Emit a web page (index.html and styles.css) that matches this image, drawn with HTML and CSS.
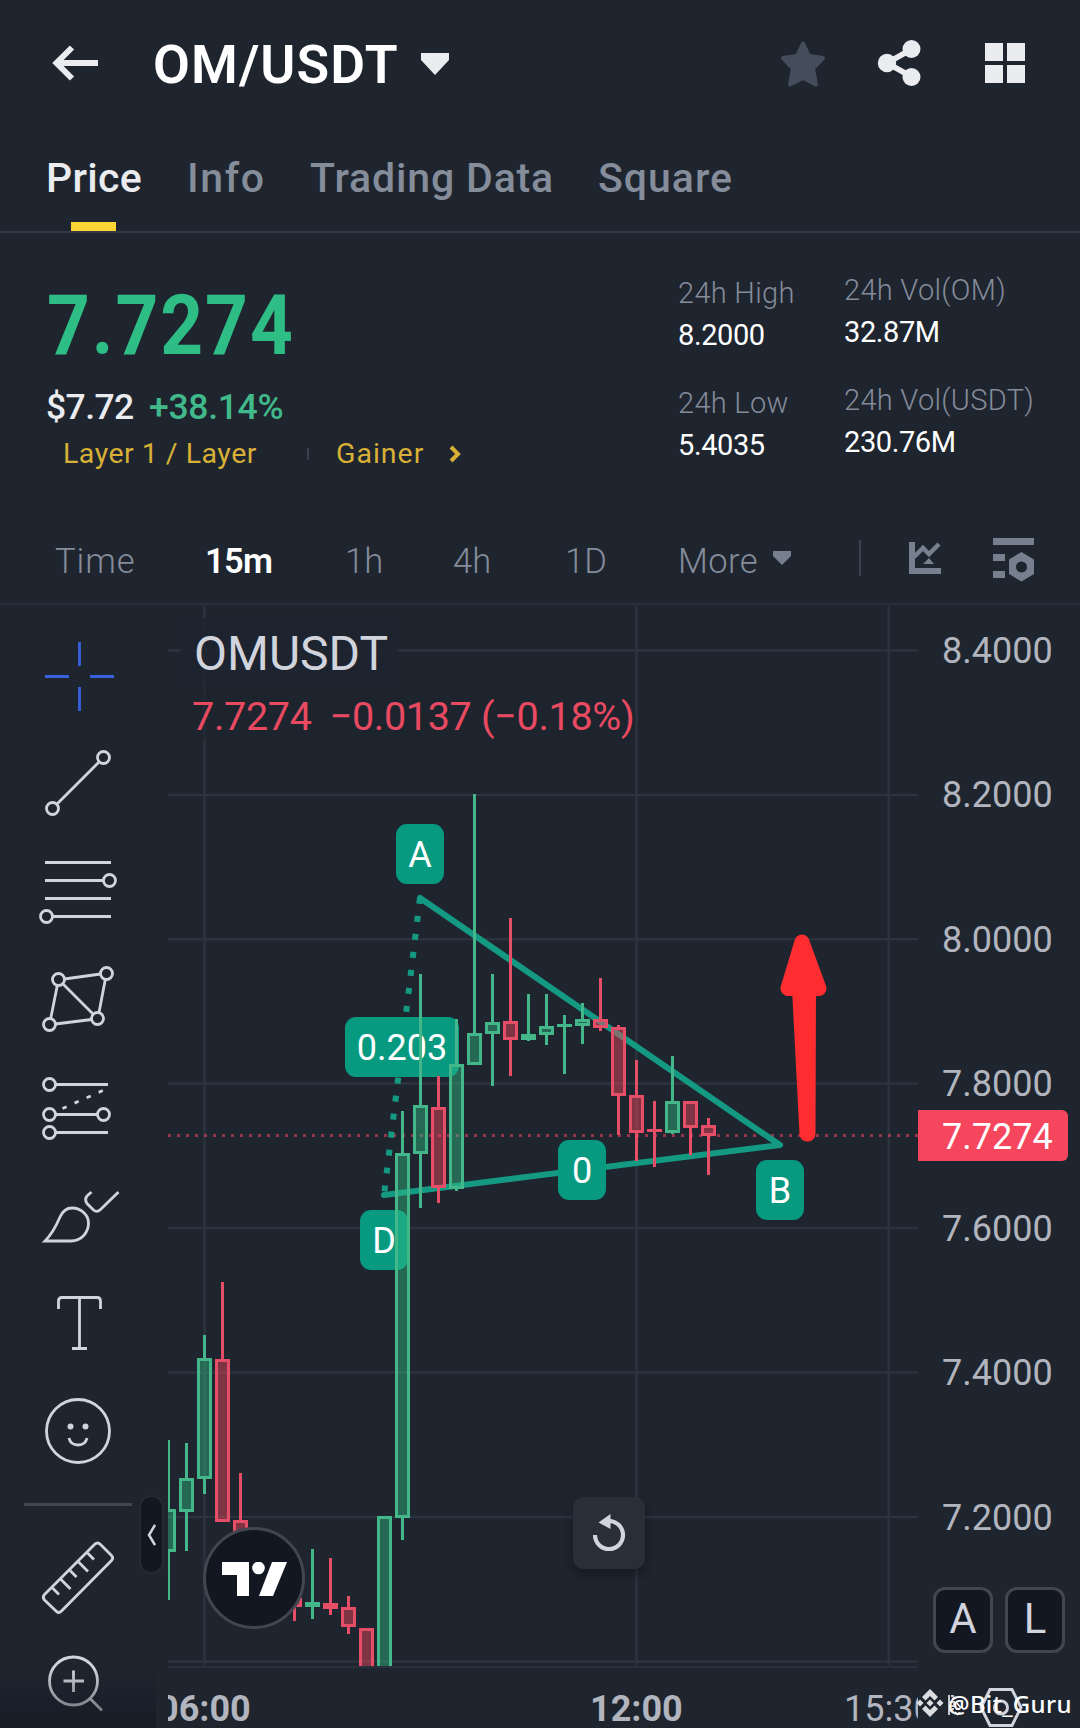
FILE: index.html
```html
<!DOCTYPE html>
<html lang="en">
<head>
<meta charset="utf-8">
<title>OM/USDT</title>
<link rel="stylesheet" href="styles.css">
</head>
<body>
<main class="screen">
  <header class="header">
    <svg class="back" width="46" height="36" viewBox="0 0 46 36"><path d="M20 2.500 4.500 18 20 33.500M4 18H46" fill="none" stroke="#eaecef" stroke-width="6"/></svg>
    <h1 class="pair">OM/USDT</h1>
    <svg class="caret" width="28" height="22" viewBox="0 0 28 22"><path d="M0 0H28V7L14 22 0 7Z" fill="#eaecef"/></svg>
    <svg class="star" width="46" height="48" viewBox="0 0 46 48"><path d="M23 3.500 29 16 43 18 33 28.500 36 44.500 23 38 10 44.500 13 28.500 3 18 17 16Z" fill="#444d5b" stroke="#444d5b" stroke-width="4" stroke-linejoin="round"/></svg>
    <svg class="share" width="44" height="48" viewBox="0 0 44 48"><path d="M35 10 10 24 35 38" fill="none" stroke="#eaecef" stroke-width="5.500"/><g fill="#eaecef"><circle cx="10" cy="24" r="9.200"/><circle cx="34.500" cy="10" r="9"/><circle cx="34.500" cy="38" r="9"/></g></svg>
    <svg class="grid" width="40" height="40" viewBox="0 0 40 40"><path d="M0 0h18v18H0zM22 0h18v18H22zM0 22h18v18H0zM22 22h18v18H22z" fill="#eaecef"/></svg>
  </header>

  <nav class="tabs">
    <a class="tab tab-price active">Price</a>
    <a class="tab tab-info">Info</a>
    <a class="tab tab-data">Trading Data</a>
    <a class="tab tab-square">Square</a>
  </nav>

  <section class="ticker">
    <div class="quote">
      <div class="last">7.7274</div>
      <div class="sub"><span class="usd">$7.72</span><span class="change">+38.14%</span></div>
      <div class="tags"><span class="layer">Layer 1 / Layer</span><i class="tick"></i><span class="gainer">Gainer</span>
        <svg width="12" height="18" viewBox="0 0 12 18"><path d="M2 2 9 9 2 16" fill="none" stroke="#d9b036" stroke-width="4"/></svg></div>
    </div>
    <dl class="stats stats-a">
      <dt class="s-high">24h High</dt><dd>8.2000</dd>
      <dt class="s-low">24h Low</dt><dd>5.4035</dd>
    </dl>
    <dl class="stats stats-b">
      <dt>24h Vol(OM)</dt><dd>32.87M</dd>
      <dt>24h Vol(USDT)</dt><dd>230.76M</dd>
    </dl>
  </section>

  <nav class="intervals">
    <a class="i-time">Time</a><a class="i-15 active">15m</a><a class="i-1h">1h</a><a class="i-4h">4h</a><a class="i-1d">1D</a><a class="i-more">More</a>
    <svg class="more-caret" width="18" height="14" viewBox="0 0 18 14"><path d="M0 0H18V5L9 14 0 5Z" fill="#76808f"/></svg>
    <i class="bar"></i>
    <svg class="ind" width="32" height="34" viewBox="0 0 32 34"><g fill="none" stroke="#76808f"><path d="M3 1V30H32" stroke-width="6"/><path d="M5 16 14 7 20 13 30 3" stroke-width="4.500"/></g><path d="M20 17 25 23H14Z" fill="#76808f"/></svg>
    <svg class="prefs" width="42" height="44" viewBox="0 0 42 44"><path d="M0 0H41V7H0zM0 16H12V23H0zM0 33H12V40H0z" fill="#76808f"/><path fill-rule="evenodd" d="M28.500 14 41 21.500V36L28.500 43.500 16 36V21.500ZM28.500 23.500a5.500 5.500 0 1 0 .01 0Z" fill="#76808f"/></svg>
  </nav>

  <section class="chart">
    <aside class="tools">
      <svg class="tool" viewBox="0 0 108 108"><path d="M55.500 20V44M55.500 65V89M21 54.500H45M66 54.500H90" stroke="#3761dd"/></svg>
      <svg class="tool" viewBox="0 0 108 108"><circle cx="79.500" cy="27.500" r="6"/><circle cx="28.500" cy="78.500" r="6"/><path d="M75 32 33 74"/></svg>
      <svg class="tool" viewBox="0 0 108 108"><path d="M21 24.500H87M21 42.500H79M21 60.500H87M29 78.500H87"/><circle cx="85.500" cy="42.500" r="6"/><circle cx="22.500" cy="78.500" r="6"/></svg>
      <svg class="tool" viewBox="0 0 108 108"><circle cx="34.500" cy="33.500" r="6"/><circle cx="82.500" cy="27.500" r="6"/><circle cx="73.500" cy="72.500" r="6"/><circle cx="25.500" cy="78.500" r="6"/><path d="M40.500 33 76.500 28M81.300 33.500 75 66.500M67.500 73.500 31.500 78M26.700 72.500 33.300 39.500M39 38 69 68"/></svg>
      <svg class="tool" viewBox="0 0 108 108"><circle cx="25.500" cy="30.500" r="6"/><circle cx="25.500" cy="60.500" r="6"/><circle cx="79.500" cy="60.500" r="6"/><circle cx="25.500" cy="78.500" r="6"/><path d="M32 30.500H84M32 60.500H73M32 78.500H84"/><path d="M38.500 54.500 80 36" stroke-dasharray="4.500 8.700"/></svg>
      <svg class="tool" viewBox="0 0 108 108"><path d="M21 79C29 71 33 62 36 55 39 48.500 43 46 48 46 57 46 64.500 53 64.500 61 64.500 71 57 79 47 79ZM94.500 30 76.500 47.500Q73 51 69.500 48L63 41.500Q60 37 63.500 33.500L67.500 30"/></svg>
      <svg class="tool" viewBox="0 0 108 108"><path d="M34.500 39V31Q34.500 27.500 38 27.500H73Q76.500 27.500 76.500 31V39M55.500 28V78M48 78.500H63"/></svg>
      <svg class="tool" viewBox="0 0 108 108"><circle cx="54" cy="53" r="31.500"/><path d="M45 60Q46.500 67 54 67T63 60"/><g fill="#d1d4dc" stroke="none"><circle cx="46.500" cy="48.500" r="3"/><circle cx="61.500" cy="48.500" r="3"/></g></svg>
      <hr class="tool-rule">
      <svg class="tool" viewBox="0 0 108 108"><path d="M70.500 20.500Q73.500 17.500 76.500 20.500L87.500 31.500Q90 34 87.500 36.500L37.500 87Q34.500 90 32 87L20.500 76Q18 73 20.500 70.500ZM27.500 63 35 70.500M36 54.500 46.500 65M45 45.500 52.500 53M53.500 37 64 47.500M62.500 28 70 35.500"/></svg>
      <svg class="tool" viewBox="0 0 108 108"><circle cx="49.500" cy="49" r="24"/><path d="M39.500 49H60M49.500 38.500V60M66.500 67 78 78.500"/></svg>
      <div class="tools-fade"></div>
    </aside>

    <svg class="plot" width="750" height="1060" viewBox="168 606 750 1060">
      <g stroke="#2d333e" stroke-width="2.500">
        <path d="M168 650.500H918M168 795H918M168 939.300H918M168 1083.500H918M168 1228H918M168 1372.500H918M168 1517H918M168 1661.500H918"/>
        <path d="M204.500 606V1665M636.500 606V1665M888.700 606V1665"/>
      </g>
      <path d="M168 1135.500H918" stroke="#f6465d" stroke-opacity=".55" stroke-width="3" stroke-dasharray="3 6"/>
      <g fill="none" stroke="#149a82" stroke-width="6" stroke-linecap="round" stroke-linejoin="round"><path d="M420 898 780 1145 384 1195"/><path d="M420 898 384 1195" stroke-dasharray="6 12.100" stroke-linecap="butt"/></g>
      <g fill="#089981"><rect x="396" y="824" width="48" height="60" rx="11"/><rect x="345" y="1017" width="114" height="60" rx="11"/><rect x="360" y="1210" width="48" height="60" rx="11"/><rect x="558" y="1140" width="48" height="60" rx="11"/><rect x="756" y="1160" width="48" height="60" rx="11"/></g>
      <g class="mark"><text x="420" y="867">A</text><text x="402" y="1060">0.203</text><text x="384" y="1253">D</text><text x="582" y="1183">0</text><text x="780" y="1203">B</text></g>
      <g id="candles"></g>
      <path d="M802 942 788 988.500 799.500 988.500 807 1134 808 1134 808.500 988.500 819 988.500Z" fill="#ff2d30" stroke="#ff2d30" stroke-width="15" stroke-linejoin="round"/>
    </svg>

    <div class="legend"><div class="symbol">OMUSDT</div><div class="delta"><span>7.7274</span><span class="diff">−0.0137 (−0.18%)</span></div></div>

    <div class="axis">
      <span>8.4000</span><span>8.2000</span><span>8.0000</span><span>7.8000</span><span>7.6000</span><span>7.4000</span><span>7.2000</span>
      <b class="price-tag">7.7274</b>
      <div class="modes"><button>A</button><button>L</button></div>
    </div>

    <div class="collapse"><svg width="9" height="22" viewBox="0 0 9 22"><path d="M8 1 2 11 8 21" fill="none" stroke="#d1d4dc" stroke-width="2.500"/></svg></div>

    <div class="tv"><svg width="66" height="34" viewBox="0 0 66 34"><g fill="#fff"><path d="M0 0H27V34H15V13H0z"/><circle cx="36.500" cy="6" r="6.300"/><path d="M50 0H65L51 34H37z"/></g></svg></div>

    <div class="reset"><svg width="36" height="40" viewBox="0 0 36 40"><path d="M4 20a14 14 0 1 0 14-14" fill="none" stroke="#d1d4dc" stroke-width="4.200"/><path d="M19.500-1V14L7.500 7.500Z" fill="#d1d4dc"/></svg></div>

    <div class="times"><span class="t0">06:00</span><span class="t1">12:00</span><span class="t2">15:30</span></div>

    <svg class="settings" width="44" height="42" viewBox="0 0 44 42"><g fill="none" stroke="#d1d4dc" stroke-width="3"><path d="M11 2.500H33L42 20.500 33 38.500H11L2 20.500Z"/><circle cx="22" cy="20.500" r="6.500"/></g></svg>
    <div class="watermark">
      <svg width="28" height="28" viewBox="0 0 28 28"><g fill="#dcdde0"><path d="M14 0 22 8 18.500 11.500 14 7 9.500 11.500 6 8zM14 28 22 20 18.500 16.500 14 21 9.500 16.500 6 20zM14 10.500 17.500 14 14 17.500 10.500 14zM4 10.500 7.500 14 4 17.500 .5 14zM24 10.500 27.500 14 24 17.500 20.500 14z"/></g></svg>
      <span>@Bit_Guru</span>
      <svg class="speck" width="14" height="22" viewBox="0 0 14 22"><path d="M1 1V21M3 2H6M4 5L8 3M2 8H5M6 7V11M9 9L12 13M3 12H7M8 15H12M2 16L5 19M7 18L10 21M10 19H13M5 14V16" stroke="#fff" stroke-width="1.500"/></svg>
    </div>
  </section>
</main>
<script src="chart.js"></script>
</body>
</html>
```
FILE: styles.css
```css
* { box-sizing: border-box; }
body { margin: 0; background: #1e252f; font-family: Roboto, sans-serif; color: #eaecef; }
svg { display: block; flex: none; }
.screen { width: 1080px; height: 1728px; overflow: hidden; display: flex; flex-direction: column; }

.header { height: 126px; display: flex; align-items: center; padding-left: 52px; }
.pair { margin: 4px 0 0 54px; width: 264px; font-size: 53.500px; font-weight: 600; letter-spacing: 1.100px; line-height: 60px; color: #fff; white-space: nowrap; padding-left: 1px; }
.caret { margin-left: 5px; margin-top: 2px; }
.star { margin-left: 331px; margin-top: 2px; }
.share { margin-left: 51px; }
.grid { margin-left: 64px; }

.tabs { height: 107px; display: flex; padding-left: 46px; border-bottom: 2px solid #333a45; }
.tab { position: relative; font-size: 41px; font-weight: 500; line-height: 48px; padding-top: 28px; color: #858c9a; white-space: nowrap; }
.tab.active { color: #eaecef; }
.tab-price { width: 141px; letter-spacing: .3px; }
.tab-info { width: 123px; letter-spacing: 1.600px; }
.tab-data { width: 288px; letter-spacing: .850px; }
.tab-square { letter-spacing: 1px; }
.tab.active::after { content: ""; position: absolute; left: 25px; bottom: 0; width: 45px; height: 9px; background: #fcd535; }

.ticker { height: 277px; display: flex; white-space: nowrap; }
.quote { width: 678px; padding-left: 46px; }
.last { margin-top: 43px; padding-left: 1px; font-size: 83px; font-weight: 700; letter-spacing: 2.200px; line-height: 100px; color: #2ebd85; transform: scaleX(.9); transform-origin: 0 50%; }
.sub { display: flex; font-size: 35.500px; font-weight: 500; line-height: 44px; margin-top: 9px; }
.usd { width: 103px; letter-spacing: -.6px; }
.change { color: #41b98b; letter-spacing: -.3px; }
.tags { display: flex; align-items: center; padding-left: 17px; font-size: 28.500px; line-height: 40px; margin-top: 5px; color: #d9b036; }
.layer { width: 244px; letter-spacing: .5px; }
.tick { width: 2px; height: 12px; background: #39404b; }
.gainer { margin-left: 27px; width: 113px; letter-spacing: 1px; }
.stats { margin: 0; font-size: 29px; line-height: 40px; color: #848b99; }
.stats-a { width: 166px; padding-top: 40px; }
.stats-b { padding-top: 37px; }
.stats dt { height: 42px; font-weight: 300; letter-spacing: .3px; }
.stats dd { margin: 0 0 27px; height: 41px; color: #fff; letter-spacing: -.4px; }

.intervals { height: 95px; display: flex; align-items: center; padding-left: 55px; font-size: 34.500px; font-weight: 300; color: #858c9a; border-bottom: 2px solid #282f3a; white-space: nowrap; }
.intervals a { line-height: 40px; margin-top: 8px; }
.intervals .active { color: #fff; font-weight: 600; letter-spacing: -.7px; }
.i-time { width: 150px; letter-spacing: .9px; } .i-15 { width: 140px; } .i-1h { width: 108px; } .i-4h { width: 112px; } .i-1d { width: 113px; } .i-more { width: 95px; letter-spacing: .4px; }
.more-caret { margin-top: 2px; }
.bar { margin-left: 68px; margin-top: 2px; width: 2px; height: 36px; background: #3b424d; }
.ind { margin-left: 48px; margin-top: 3px; }
.prefs { margin-left: 52px; margin-top: 6px; }

.chart { position: relative; flex: 1; display: grid; grid-template-columns: 168px 750px 162px; grid-template-rows: 1060px auto; margin-top: 1px; }
.tools { grid-row: 1 / 3; height: 1122px; padding: 16px 0 0 24px; overflow: hidden; position: relative; }
.tool { width: 108px; height: 108px; fill: none; stroke: #d1d4dc; stroke-width: 2.800; }
.tool-rule { margin: 17px 0 18px; width: 108px; height: 3px; border: 0; background: #434651; }
.tools-fade { position: absolute; left: 0; bottom: 0; width: 156px; height: 60px; background: linear-gradient(rgba(19,23,34,0), rgba(19,23,34,.65)); }
.mark { font-size: 36px; fill: #fff; text-anchor: middle; }
.legend { position: absolute; left: 180px; top: 12px; display: flex; flex-direction: column; align-items: flex-start; }
.symbol { font-size: 48px; line-height: 56px; padding: 8px 10px 0 14px; color: #d1d4dc; background: rgba(30,37,47,.85); }
.delta { display: flex; font-size: 39.500px; line-height: 48px; padding: 11px 0 0 12px; color: #e94a61; letter-spacing: -.3px; background: rgba(30,37,47,.6); }
.diff { margin-left: 18px; }
.axis { position: relative; display: flex; flex-direction: column; margin-top: -27px; height: 1089px; padding-left: 24px; font-size: 36px; color: #b2b5be; }
.axis > span { height: 144.450px; line-height: 145px; }
.price-tag { position: absolute; left: 0; top: 531px; width: 150px; height: 51px; padding-left: 24px; line-height: 54px; font-weight: 400; color: #fff; background: #f6465d; border-radius: 0 6px 6px 0; }
.modes { position: absolute; left: 15px; top: 1008px; display: flex; gap: 12px; }
.modes button { width: 60px; height: 66px; padding: 0 0 3px; border: 3px solid #434651; border-radius: 12px; background: #131722; color: #d1d4dc; font: 42px Roboto, sans-serif; }
.collapse { position: absolute; left: 139px; top: 889px; width: 25px; height: 79px; display: flex; align-items: center; padding-left: 8px; background: #131722; border: 2px solid #252a35; border-radius: 12px; }
.collapse svg { margin-left: -2px; }
.tv { position: absolute; left: 203px; top: 921px; width: 102px; height: 102px; display: flex; align-items: center; justify-content: center; padding: 2px 0 0 2px; background: #131722; border: 3px solid #434651; border-radius: 50%; }
.reset { position: absolute; left: 573px; top: 891px; width: 72px; height: 72px; padding: 18px 18px; background: #2a2e39; border-radius: 10px; box-shadow: 0 6px 9px rgba(10,13,20,.45); }
.reset svg { overflow: visible; }
.times { grid-column: 2; height: 62px; border-top: 2px solid #2a303b; overflow: hidden; display: flex; font-size: 36px; font-weight: 700; line-height: 42px; padding-top: 20px; color: #b2b5be; }
.times span { flex: none; }
.t0 { width: 432px; margin-left: -10px; }
.t1 { width: 254px; }
.t2 { font-weight: 400; }
.settings { position: absolute; left: 979px; top: 1081px; }
.watermark { position: absolute; left: 916px; top: 1081px; display: flex; align-items: center; gap: 4px; height: 32px; font: 500 24px "Noto Sans", sans-serif; letter-spacing: .3px; color: #fff; white-space: nowrap; }
.speck { position: absolute; left: 32px; top: 7px; }
```
FILE: chart.js
```js
// Each row: slot, direction, high, body top, body bottom, low (pixel rows of the plot)
const rows = [
  [-2, 1, 1440, 1509, 1552, 1600], [-1, 1, 1443, 1478, 1512, 1551], [0, 1, 1335, 1358, 1479, 1494],
  [1, 0, 1282, 1359, 1522, 1522], [2, 0, 1473, 1520, 1560, 1580], [5, 0, 1590, 1598, 1607, 1621],
  [6, 1, 1549, 1602, 1607, 1619], [7, 0, 1558, 1603, 1609, 1615], [8, 0, 1596, 1607, 1627, 1634],
  [9, 0, 1628, 1628, 1680, 1680], [10, 1, 1516, 1516, 1680, 1680], [11, 1, 1111, 1153, 1518, 1540],
  [12, 1, 974, 1105, 1154, 1208], [13, 0, 1076, 1107, 1188, 1203], [14, 1, 1019, 1064, 1189, 1191],
  [15, 1, 794, 1033, 1065, 1065], [16, 1, 974, 1022, 1034, 1086], [17, 0, 918, 1021, 1040, 1076],
  [18, 1, 994, 1034, 1040, 1041], [19, 1, 994, 1026, 1035, 1045], [20, 1, 1015, 1024, 1027, 1074],
  [21, 1, 1003, 1019, 1026, 1044], [22, 0, 978, 1019, 1028, 1031], [23, 0, 1025, 1027, 1096, 1135],
  [24, 0, 1060, 1095, 1133, 1161], [25, 0, 1101, 1129, 1132, 1167], [26, 1, 1056, 1101, 1133, 1134],
  [27, 0, 1101, 1101, 1128, 1155], [28, 0, 1118, 1125, 1136, 1175]
];
document.getElementById('candles').innerHTML = rows.map(([k, up, hi, top, bot, lo]) => {
  const x = 204.5 + 18 * k, c = up ? '#43b78a' : '#e54e66', f = up ? '#2ebd85' : '#f6465d';
  const h = bot - top;
  const body = h <= 6
    ? `<rect x="${x - 7.5}" y="${top}" width="15" height="${h}" fill="${c}"/>`
    : `<rect x="${x - 6}" y="${top + 1.5}" width="12" height="${h - 3}" fill="${f}" fill-opacity=".45" stroke="${c}" stroke-width="3"/>`;
  return `<path d="M${x} ${hi}V${top}M${x} ${bot}V${lo}" stroke="${c}" stroke-width="3"/>${body}`;
}).join('');
```
